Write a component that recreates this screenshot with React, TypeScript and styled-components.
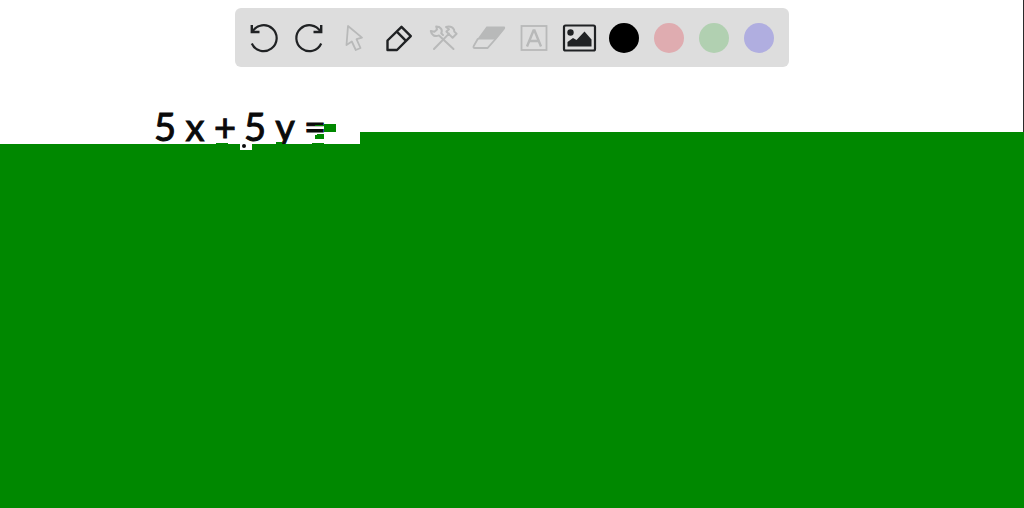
import React from "react";
import styled, { createGlobalStyle } from "styled-components";

const GlobalStyle = createGlobalStyle`
  *, *::before, *::after { box-sizing: border-box; }
  body {
    margin: 0;
    background: #ffffff;
    font-family: "Lato", "Liberation Sans", sans-serif;
  }
`;

const Page = styled.div`
  display: flex;
  flex-direction: column;
  min-height: 100vh;
`;

const Sheet = styled.header`
  display: flex;
  flex-direction: column;
  align-items: center;
  height: 132px;
  padding-top: 8px;
  border-right: 1px solid #2b2b2b;
`;

const Toolbar = styled.div`
  display: flex;
  flex-shrink: 0;
  align-items: center;
  height: 59px;
  padding: 0 7px;
  border-radius: 6px;
  background: #dddddd;
`;

const ToolButton = styled.button<{ $muted?: boolean }>`
  display: flex;
  align-items: center;
  justify-content: center;
  width: 45px;
  height: 45px;
  padding: 0;
  border: 0;
  background: transparent;
  color: ${(p) => (p.$muted ? "#b8b9b9" : "#202224")};
  cursor: pointer;
`;

const Swatch = styled.span<{ $color: string }>`
  width: 30px;
  height: 30px;
  border-radius: 50%;
  background: ${(p) => p.$color};
`;

const Icon = styled.svg`
  display: block;
  width: 36px;
  height: 36px;
  fill: none;
  stroke: currentColor;
  stroke-width: 2.2;
`;

/* The fill starts 12px lower across the first 360px, so the paper shows there. */
const Board = styled.main`
  position: relative;
  flex: 1;
  background:
    linear-gradient(#008800, #008800) 360px 0 no-repeat,
    linear-gradient(#008800, #008800) 0 12px no-repeat;
`;

const Writing = styled.p`
  display: flex;
  flex-shrink: 0;
  align-self: flex-start;
  margin: 33px 0 0;
  padding-left: 150px;
  color: #0a0a0a;
  font-size: 38px;
  line-height: 52px;
`;

const Mark = styled.span`
  width: 30px;
  text-align: center;
  -webkit-text-stroke: 1px currentColor;
`;

const Fragments = styled.svg`
  position: absolute;
  top: -12px;
  left: 210px;
  width: 130px;
  height: 32px;
`;

type Tool = { name: string; muted?: boolean; art: React.ReactNode };

const tools: Tool[] = [
  {
    name: "Undo",
    art: (
      <>
        <path d="M5.8 23.5A13 13 0 1 0 6.5 11.5" />
        <path d="M5.8 5V12H13.5" strokeWidth="2.4" />
      </>
    ),
  },
  {
    name: "Redo",
    art: (
      <>
        <path d="M30.2 23.5A13 13 0 1 1 29.5 11.5" />
        <path d="M30.2 5V12H22.5" strokeWidth="2.4" />
      </>
    ),
  },
  {
    name: "Select",
    muted: true,
    art: (
      <path
        d="M12 6L10.5 25L15.8 21.5L19.8 30L24.5 28L20.5 19.2L26 17.6Z"
        strokeLinejoin="round"
        strokeWidth="1.8"
      />
    ),
  },
  {
    name: "Pen",
    art: (
      <path
        d="M6.5 30V20.5L20.5 6.8L29.8 16.2L16 30ZM15.8 11.6L25 20.8"
        strokeLinejoin="round"
        strokeWidth="2.4"
      />
    ),
  },
  {
    name: "Tools",
    muted: true,
    art: (
      <g strokeWidth="2" strokeLinejoin="round" strokeLinecap="round">
        <path d="M4.8 11C5.5 15.5 9 17 13 15.4L27.5 29M4.8 11L8.4 11.8L11 9.4L10.2 6.5C14.5 6.5 17 9.8 15.2 13.2L17 15" />
        <path d="M8 29L23 13.6M20 7C23.5 6 26.2 7 28 9.5L28.3 11.6L30.6 13.8L26.6 17.8L20.4 11.6L23 9.2Z" />
      </g>
    ),
  },
  {
    name: "Eraser",
    muted: true,
    art: (
      <>
        <path
          d="M15.5 6.5H33Q35 6.5 33.5 8.5L24.5 19.5H6Z"
          fill="currentColor"
          stroke="none"
        />
        <path
          d="M7 18.5L3 25.5Q1.5 28 4 28H16.5L25 18.5L33.5 8"
          strokeWidth="1.8"
        />
      </>
    ),
  },
  {
    name: "Text",
    muted: true,
    art: (
      <>
        <rect x="5.5" y="6" width="25" height="24" strokeWidth="1.8" />
        <path d="M11 26.5L17.5 10.5H18.5L25 26.5M13.5 21H22.5" strokeWidth="2.4" />
      </>
    ),
  },
  {
    name: "Image",
    art: (
      <>
        <rect x="3" y="5.5" width="31" height="25" rx="1.5" />
        <circle cx="9.5" cy="12.5" r="3.2" fill="currentColor" stroke="none" />
        <path
          d="M6.5 26.5V22L12 18L15.5 20L23.5 11.5L30.5 19.5V26.5Z"
          fill="currentColor"
          stroke="none"
        />
      </>
    ),
  },
];

const colors = [
  { name: "Black", value: "#000000" },
  { name: "Red", value: "#dfacb0" },
  { name: "Green", value: "#b1d0b1" },
  { name: "Blue", value: "#b0aee0" },
];

export default function App() {
  return (
    <Page>
      <GlobalStyle />
      <Sheet>
        <Toolbar role="toolbar" aria-label="Drawing tools">
          {tools.map((tool) => (
            <ToolButton
              key={tool.name}
              type="button"
              aria-label={tool.name}
              $muted={tool.muted}
            >
              <Icon viewBox="0 0 36 36" aria-hidden="true">
                {tool.art}
              </Icon>
            </ToolButton>
          ))}
          {colors.map((color) => (
            <ToolButton key={color.name} type="button" aria-label={color.name}>
              <Swatch $color={color.value} />
            </ToolButton>
          ))}
        </Toolbar>
        <Writing>
          {[..."5x+5y="].map((mark, i) => (
            <Mark key={i}>{mark}</Mark>
          ))}
        </Writing>
      </Sheet>
      <Board>
        <Fragments viewBox="0 12 130 32" aria-hidden="true">
          <g fill="#008800">
            <rect x="114" y="16" width="12" height="8" />
            <rect x="105" y="17" width="10" height="1" />
            <rect x="107" y="26" width="7" height="1" />
            <rect x="105" y="27" width="9" height="4" />
            <rect x="102" y="35" width="12" height="1" />
            <rect x="66" y="34" width="6" height="2" />
            <rect x="6" y="35" width="12" height="1" />
          </g>
          <rect x="30" y="36" width="12" height="6" fill="#ffffff" />
          <circle cx="34" cy="38" r="2" fill="#0a0a0a" />
        </Fragments>
      </Board>
    </Page>
  );
}
